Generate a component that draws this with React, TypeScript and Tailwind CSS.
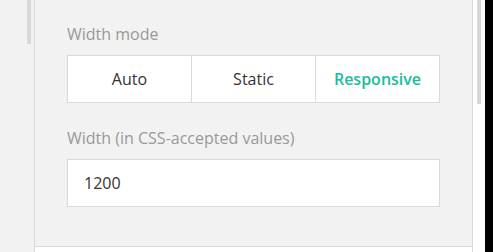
import React, { useState } from 'react';

const modes = ['Auto', 'Static', 'Responsive'];

export default function App() {
  const [mode, setMode] = useState('Responsive');
  const [width, setWidth] = useState('1200');

  return (
    <div
      className="flex w-[493px] h-[252px] overflow-hidden bg-[#f2f2f2]"
      style={{ fontFamily: '"Open Sans", "Noto Sans", sans-serif' }}
    >
      {/* left gutter with scrollbar */}
      <div className="w-[34px] shrink-0 flex justify-end pr-[3px]">
        <div className="w-[4px] h-[44px] bg-[#d9d9d9]" />
      </div>

      {/* settings panel */}
      <div className="w-[439px] shrink-0 flex flex-col border-x border-[#d9d9d9]">
        <div className="flex-1 px-[32px] pt-[24px]">
          <div className="text-[16px] leading-[21px] text-[#999999]">Width mode</div>
          <div className="mt-[10px] flex h-[48px] border border-[#d9d9d9] bg-white">
            {modes.map((m, i) => (
              <button
                key={m}
                onClick={() => setMode(m)}
                className={`flex-1 flex items-center justify-center text-[16px] ${
                  i > 0 ? 'border-l border-[#d9d9d9]' : ''
                } ${mode === m ? 'text-[#1abc9c] font-semibold' : 'text-[#333333]'}`}
              >
                {m}
              </button>
            ))}
          </div>

          <div className="mt-[25px] text-[16px] leading-[21px] text-[#999999]">
            Width (in CSS-accepted values)
          </div>
          <input
            value={width}
            onChange={(e) => setWidth(e.target.value)}
            className="mt-[10px] block w-full h-[48px] border border-[#d9d9d9] bg-white px-[16px] text-[16px] text-[#333333] outline-none"
          />
        </div>
        <div className="h-[6px] shrink-0 border-t border-[#d9d9d9] bg-white" />
      </div>

      {/* right scroll strip */}
      <div className="w-[12px] shrink-0 bg-white flex pl-[4px]">
        <div className="w-[4px] h-[104px] bg-[#d9d9d9]" />
      </div>
      <div className="w-[8px] shrink-0 bg-black" />
    </div>
  );
}
